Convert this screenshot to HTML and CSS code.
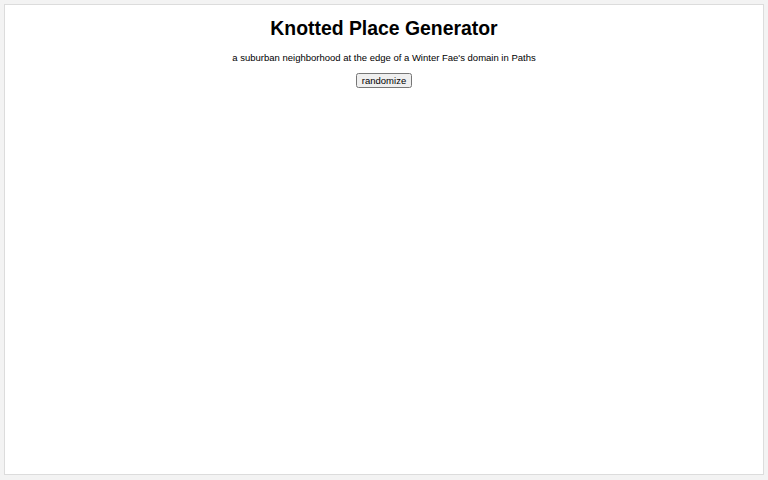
FILE: index.html
```html
<!DOCTYPE html>
<html lang="en">
<head>
    <meta charset="UTF-8">
    <meta name="viewport" content="width=device-width, initial-scale=1.0">
    <title>Knotted Place Generator</title>
    <link rel="stylesheet" href="styles.css">
</head>
<body>
    <div class="container">
        <h1>Knotted Place Generator</h1>
        <p class="place" id="place">a suburban neighborhood at the edge of a Winter Fae's domain in Paths</p>
        <button class="randomize-btn" id="randomize">randomize</button>
    </div>
</body>
</html>
```

FILE: styles.css
```css
body {
    font-family: "Liberation Sans", Arial, sans-serif;
    background-color: #f3f3f3;
    color: black;
    margin: 0;
    padding: 4px 4px 5px 4px;
}
.container {
    background: white;
    border: 1px solid #dcdcdc;
    box-sizing: border-box;
    height: 471px;
    text-align: center;
    padding-top: 12px;
}
h1 {
    font-size: 19.4px;
    margin: 0 0 12px 0;
}
.place {
    font-size: 9.5px;
    margin: 0 0 7px 0;
}
.randomize-btn {
    font-family: "Liberation Sans", Arial, sans-serif;
    font-size: 9.5px;
    padding: 0 4px;
}
```
